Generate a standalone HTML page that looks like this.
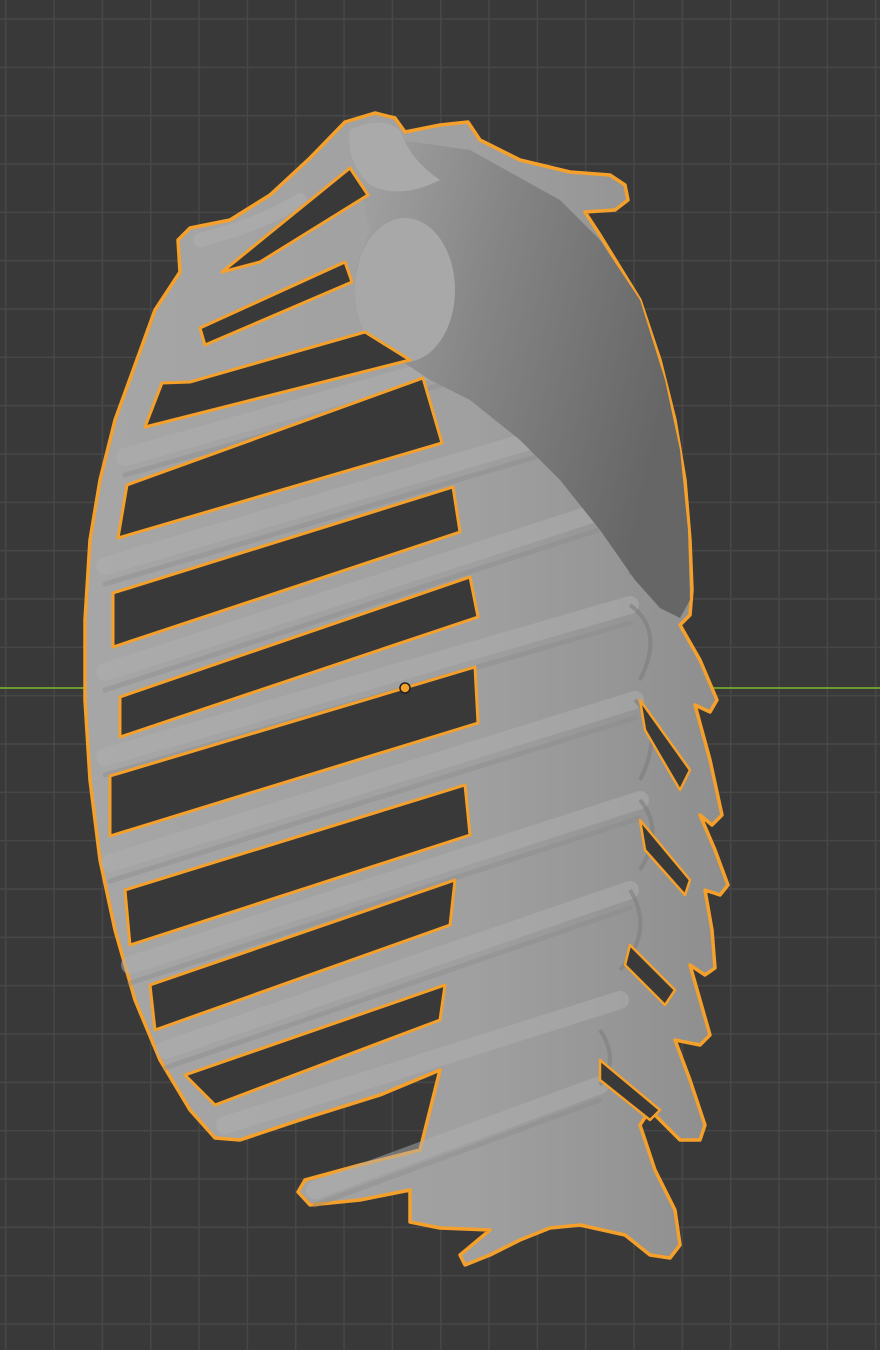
<!DOCTYPE html>
<html><head><meta charset="utf-8"><style>
html,body{margin:0;padding:0;background:#393939;}
svg{display:block;}
</style></head><body>
<svg width="880" height="1350" viewBox="0 0 880 1350" xmlns="http://www.w3.org/2000/svg">
<defs>
<pattern id="g" x="5" y="18.3" width="48.33" height="48.33" patternUnits="userSpaceOnUse">
<path d="M0 0H48.33M0 0V48.33" stroke="#474747" stroke-width="3" fill="none"/>
</pattern>
<linearGradient id="sc" x1="0" y1="0" x2="1" y2="0.3">
<stop offset="0" stop-color="#a4a4a4"/><stop offset="0.45" stop-color="#858585"/><stop offset="1" stop-color="#666"/>
</linearGradient>
<linearGradient id="sp" x1="0" y1="0" x2="1" y2="0">
<stop offset="0" stop-color="#a6a6a6"/><stop offset="0.6" stop-color="#a0a0a0"/><stop offset="1" stop-color="#8e8e8e"/>
</linearGradient>
</defs>
<rect width="880" height="1350" fill="#393939"/>
<rect width="880" height="1350" fill="url(#g)"/>
<line x1="0" y1="688" x2="880" y2="688" stroke="#6b9b2b" stroke-width="2"/>

<path d="M345,122 L375,113 L395,118 L405,132 L440,125 L468,122 L480,140 L520,160 L570,172 L610,175 L625,185 L628,200 L615,210 L585,212 L600,235 L640,300 L660,360 L675,420 L685,480 L690,540 L692,590 L690,615 L680,625 L700,660 L717,700 L710,712 L695,705 L710,760 L722,815 L712,825 L700,815 L715,850 L728,885 L720,895 L705,890 L712,930 L715,968 L705,975 L690,965 L700,1000 L710,1035 L700,1045 L675,1040 L690,1080 L705,1125 L700,1140 L680,1140 L650,1110 L640,1125 L655,1170 L675,1210 L680,1245 L670,1258 L650,1255 L625,1235 L580,1225 L550,1228 L520,1240 L490,1255 L465,1265 L460,1255 L490,1230 L440,1228 L410,1222 L410,1190 L360,1200 L310,1205 L298,1192 L305,1180 L360,1165 L420,1150 L430,1110 L440,1070 L380,1095 L300,1120 L240,1140 L215,1138 L190,1110 L160,1060 L135,1000 L115,930 L100,860 L90,780 L85,700 L85,620 L90,540 L100,480 L115,420 L135,365 L155,310 L180,272 L178,240 L190,228 L230,220 L270,195 L310,158 Z" fill="url(#sp)" stroke="#f5a02a" stroke-width="3.5" stroke-linejoin="round"/>

<g stroke="#b0b0b0" stroke-width="18" stroke-linecap="round" fill="none" opacity="0.5">
<path d="M125,457 L560,333"/>
<path d="M105,566 L600,420"/>
<path d="M105,672 L620,505"/>
<path d="M105,757 L630,605"/>
<path d="M110,863 L635,700"/>
<path d="M130,965 L640,800"/>
<path d="M165,1050 L630,890"/>
<path d="M225,1125 L620,1000"/>
<path d="M315,1190 L600,1085"/>
</g>
<g stroke="#888" stroke-width="5" stroke-linecap="round" fill="none" opacity="0.35">
<path d="M125,475 L560,351"/>
<path d="M105,584 L600,438"/>
<path d="M105,690 L620,523"/>
<path d="M105,775 L630,623"/>
<path d="M110,881 L635,718"/>
<path d="M130,983 L640,818"/>
<path d="M165,1068 L630,908"/>
<path d="M315,1205 L600,1100"/>
</g>
<g stroke="#7e7e7e" stroke-width="4" fill="none" opacity="0.6">
<path d="M600,420 Q640,440 620,480"/>
<path d="M620,505 Q655,530 630,575"/>
<path d="M630,605 Q665,630 640,680"/>
<path d="M635,700 Q665,730 640,780"/>
<path d="M640,800 Q665,830 640,870"/>
<path d="M630,890 Q655,930 620,970"/>
<path d="M600,1085 Q620,1060 600,1030"/>
</g>

<path d="M355,150 L400,140 L470,150 L560,200 L600,240 L640,300 L665,380 L680,450 L688,530 L690,600 L680,618 L660,608 L635,580 L600,530 L560,480 L520,440 L470,400 L430,380 L385,350 L360,310 L355,270 L370,230 L360,190 Z" fill="url(#sc)"/>
<ellipse cx="405" cy="290" rx="50" ry="72" fill="#a8a8a8"/>
<path d="M350,130 Q380,115 400,130 Q410,160 440,180 Q400,200 370,185 Q345,160 350,130Z" fill="#aaa"/>
<path d="M200,240 Q260,225 300,200" stroke="#aaa" stroke-width="14" fill="none" stroke-linecap="round"/>

<g fill="#393939" stroke="#f5a02a" stroke-width="3" stroke-linejoin="round">
<path d="M222,272 L350,168 L368,195 L260,262 Z"/>
<path d="M200,328 L345,262 L352,282 L205,345 Z"/>
<path d="M145,427 L162,383 L190,382 L365,332 L410,360 Z"/>
<path d="M127,485 L423,378 L442,443 L118,538 Z"/>
<path d="M113,593 L453,487 L460,532 L113,647 Z"/>
<path d="M120,697 L470,577 L478,617 L120,737 Z"/>
<path d="M110,776 L475,667 L478,723 L110,836 Z"/>
<path d="M125,890 L465,785 L470,835 L130,945 Z"/>
<path d="M150,985 L455,880 L450,925 L155,1030 Z"/>
<path d="M185,1075 L445,985 L440,1020 L215,1105 Z"/>
</g>
<g fill="#393939" stroke="#f5a02a" stroke-width="2.5" stroke-linejoin="round">
<path d="M640,700 L690,770 L680,790 L645,730 Z"/>
<path d="M640,820 L690,880 L685,895 L645,850 Z"/>
<path d="M630,945 L675,990 L665,1005 L625,965 Z"/>
<path d="M600,1060 L660,1110 L650,1120 L600,1080 Z"/>
</g>

<circle cx="405" cy="688" r="5" fill="#f5a02a" stroke="#222" stroke-width="1.5"/>
</svg>
</body></html>
